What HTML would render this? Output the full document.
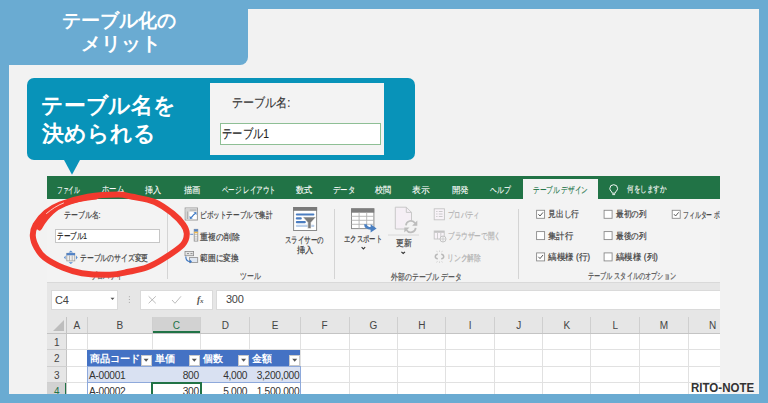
<!DOCTYPE html>
<html lang="ja"><head><meta charset="utf-8"><style>
*{margin:0;padding:0;box-sizing:border-box}
html,body{width:768px;height:403px;overflow:hidden}
body{position:relative;background:#6aabd2;font-family:"Liberation Sans",sans-serif}
.a{position:absolute}
.t{position:absolute;white-space:nowrap;line-height:1;transform-origin:0 0}
.n{position:absolute;white-space:nowrap;line-height:1;font-size:10.2px;letter-spacing:-0.3px;color:#333}
.h{position:absolute;white-space:nowrap;line-height:1;font-size:10px;color:#444;text-align:center}
svg{position:absolute;overflow:visible}
</style></head><body>

<div class="a" style="left:9px;top:9px;width:750px;height:385px;background:#f2f2f2"></div>
<div class="a" style="left:0;top:0;width:248px;height:65px;background:#6aabd2;border-bottom-right-radius:8px"></div>
<div class="a" style="left:27.4px;top:77.8px;width:387.6px;height:82.5px;background:#0893b9;border-radius:7px"></div>
<svg style="left:0;top:0" width="1" height="1"><path d="M63.5 159 L80.5 159 L72 174.8 Z" fill="#0893b9"/></svg>
<div class="a" style="left:209.7px;top:82.7px;width:174.6px;height:72.2px;background:#f3f3f3"></div>
<div class="a" style="left:220px;top:123px;width:161px;height:22px;background:#fff;border:1px solid #8ebf95"></div>


<div class="a" style="left:47px;top:176px;width:673px;height:218px;background:#fff"></div>
<div class="a" style="left:47px;top:176px;width:673px;height:23px;background:#217346"></div>
<div class="a" style="left:523px;top:179px;width:75px;height:20px;background:#f3f3f3"></div>
<div class="a" style="left:47px;top:199px;width:673px;height:83px;background:#f3f3f3"></div>
<div class="a" style="left:47px;top:282px;width:673px;height:35px;background:#e6e6e6;border-top:1px solid #d9d9d9"></div>
<!-- separators -->
<div class="a" style="left:167px;top:209px;width:1px;height:70px;background:#d4d4d4"></div>
<div class="a" style="left:334px;top:209px;width:1px;height:70px;background:#d4d4d4"></div>
<div class="a" style="left:518px;top:209px;width:1px;height:70px;background:#d4d4d4"></div>
<!-- group1 input -->
<div class="a" style="left:55px;top:229px;width:105px;height:14px;background:#fff;border:1px solid #c6c6c6"></div>
<!-- formula bar -->
<div class="a" style="left:51px;top:290px;width:67px;height:20px;background:#fff;border:1px solid #dadada"></div>
<div class="a" style="left:140px;top:290px;width:73px;height:20px;background:#fff;border:1px solid #dadada"></div>
<div class="a" style="left:216px;top:290px;width:504px;height:20px;background:#fff;border:1px solid #dadada;border-right:none"></div>

<div class="a" style="left:47px;top:317px;width:673px;height:16.5px;background:#e6e6e6"></div>
<div class="a" style="left:47px;top:317px;width:19.5px;height:80px;background:#e6e6e6"></div>
<div class="a" style="left:152.2px;top:317px;width:48.6px;height:16.3px;background:#d2d2d2"></div>
<div class="a" style="left:152.2px;top:331.3px;width:48.6px;height:2px;background:#217346"></div>
<div class="a" style="left:47px;top:382.9px;width:19.5px;height:16px;background:#d2d2d2"></div>
<div class="a" style="left:64.5px;top:382.9px;width:2px;height:16px;background:#217346"></div>
<svg style="left:0;top:0" width="1" height="1"><path d="M64 320 L64 331 L53 331 Z" fill="#bdbdbd"/></svg>
<div class="a" style="left:47px;top:333px;width:673px;height:1px;background:#c4c4c4"></div>
<div class="a" style="left:66px;top:317px;width:1px;height:80px;background:#c4c4c4"></div>
<div class="a" style="left:86.8px;top:317px;width:1px;height:16px;background:#cfcfcf"></div>
<div class="a" style="left:86.8px;top:334px;width:1px;height:65px;background:#e1e1e1"></div>
<div class="a" style="left:151.7px;top:317px;width:1px;height:16px;background:#cfcfcf"></div>
<div class="a" style="left:151.7px;top:334px;width:1px;height:65px;background:#e1e1e1"></div>
<div class="a" style="left:200.3px;top:317px;width:1px;height:16px;background:#cfcfcf"></div>
<div class="a" style="left:200.3px;top:334px;width:1px;height:65px;background:#e1e1e1"></div>
<div class="a" style="left:249.3px;top:317px;width:1px;height:16px;background:#cfcfcf"></div>
<div class="a" style="left:249.3px;top:334px;width:1px;height:65px;background:#e1e1e1"></div>
<div class="a" style="left:299.8px;top:317px;width:1px;height:16px;background:#cfcfcf"></div>
<div class="a" style="left:299.8px;top:334px;width:1px;height:65px;background:#e1e1e1"></div>
<div class="a" style="left:348.5px;top:317px;width:1px;height:16px;background:#cfcfcf"></div>
<div class="a" style="left:348.5px;top:334px;width:1px;height:65px;background:#e1e1e1"></div>
<div class="a" style="left:397.2px;top:317px;width:1px;height:16px;background:#cfcfcf"></div>
<div class="a" style="left:397.2px;top:334px;width:1px;height:65px;background:#e1e1e1"></div>
<div class="a" style="left:445.4px;top:317px;width:1px;height:16px;background:#cfcfcf"></div>
<div class="a" style="left:445.4px;top:334px;width:1px;height:65px;background:#e1e1e1"></div>
<div class="a" style="left:494.1px;top:317px;width:1px;height:16px;background:#cfcfcf"></div>
<div class="a" style="left:494.1px;top:334px;width:1px;height:65px;background:#e1e1e1"></div>
<div class="a" style="left:542.2px;top:317px;width:1px;height:16px;background:#cfcfcf"></div>
<div class="a" style="left:542.2px;top:334px;width:1px;height:65px;background:#e1e1e1"></div>
<div class="a" style="left:590.4px;top:317px;width:1px;height:16px;background:#cfcfcf"></div>
<div class="a" style="left:590.4px;top:334px;width:1px;height:65px;background:#e1e1e1"></div>
<div class="a" style="left:639.1px;top:317px;width:1px;height:16px;background:#cfcfcf"></div>
<div class="a" style="left:639.1px;top:334px;width:1px;height:65px;background:#e1e1e1"></div>
<div class="a" style="left:687.8px;top:317px;width:1px;height:16px;background:#cfcfcf"></div>
<div class="a" style="left:687.8px;top:334px;width:1px;height:65px;background:#e1e1e1"></div>
<div class="a" style="left:67px;top:349.3px;width:653px;height:1px;background:#e1e1e1"></div>
<div class="a" style="left:47px;top:349.3px;width:20px;height:1px;background:#cfcfcf"></div>
<div class="a" style="left:67px;top:366.0px;width:653px;height:1px;background:#e1e1e1"></div>
<div class="a" style="left:47px;top:366.0px;width:20px;height:1px;background:#cfcfcf"></div>
<div class="a" style="left:67px;top:382.4px;width:653px;height:1px;background:#e1e1e1"></div>
<div class="a" style="left:47px;top:382.4px;width:20px;height:1px;background:#cfcfcf"></div>
<div class="a" style="left:67px;top:398.8px;width:653px;height:1px;background:#e1e1e1"></div>
<div class="a" style="left:47px;top:398.8px;width:20px;height:1px;background:#cfcfcf"></div>
<div class="h" style="left:66.5px;top:321px;width:20.8px;color:#444">A</div>
<div class="h" style="left:87.3px;top:321px;width:64.9px;color:#444">B</div>
<div class="h" style="left:152.2px;top:321px;width:48.6px;color:#217346">C</div>
<div class="h" style="left:200.8px;top:321px;width:49.0px;color:#444">D</div>
<div class="h" style="left:249.8px;top:321px;width:50.5px;color:#444">E</div>
<div class="h" style="left:300.3px;top:321px;width:48.7px;color:#444">F</div>
<div class="h" style="left:349.0px;top:321px;width:48.7px;color:#444">G</div>
<div class="h" style="left:397.7px;top:321px;width:48.2px;color:#444">H</div>
<div class="h" style="left:445.9px;top:321px;width:48.7px;color:#444">I</div>
<div class="h" style="left:494.6px;top:321px;width:48.1px;color:#444">J</div>
<div class="h" style="left:542.7px;top:321px;width:48.2px;color:#444">K</div>
<div class="h" style="left:590.9px;top:321px;width:48.7px;color:#444">L</div>
<div class="h" style="left:639.6px;top:321px;width:48.7px;color:#444">M</div>
<div class="h" style="left:688.3px;top:321px;width:48.7px;color:#444">N</div>
<div class="h" style="left:47px;top:337.8px;width:19.5px;color:#444">1</div>
<div class="h" style="left:47px;top:354.3px;width:19.5px;color:#444">2</div>
<div class="h" style="left:47px;top:371.0px;width:19.5px;color:#444">3</div>
<div class="h" style="left:47px;top:387.4px;width:19.5px;color:#217346">4</div>
<div class="a" style="left:87.3px;top:349.8px;width:213px;height:16.7px;background:#4472c4"></div>
<div class="a" style="left:87.3px;top:366.5px;width:213px;height:16.4px;background:#d9e1f2"></div>
<div class="a" style="left:87.3px;top:382.9px;width:213px;height:16px;background:#fff"></div>
<div class="a" style="left:87.3px;top:366px;width:213px;height:1px;background:#8ea9db"></div>
<div class="a" style="left:87.3px;top:382.4px;width:213px;height:1px;background:#8ea9db"></div>
<div class="a" style="left:87px;top:366px;width:1px;height:33px;background:#8ea9db"></div>
<div class="a" style="left:300px;top:366px;width:1px;height:33px;background:#8ea9db"></div>
<div class="a" style="left:140.6px;top:354.7px;width:11px;height:11px;background:#fff;border:1px solid #c9c9c9"></div>
<svg style="left:0;top:0" width="1" height="1"><path d="M143.6 358.7 L148.6 358.7 L146.1 361.7 Z" fill="#555"/></svg>
<div class="a" style="left:188.8px;top:354.7px;width:11px;height:11px;background:#fff;border:1px solid #c9c9c9"></div>
<svg style="left:0;top:0" width="1" height="1"><path d="M191.8 358.7 L196.8 358.7 L194.3 361.7 Z" fill="#555"/></svg>
<div class="a" style="left:238.1px;top:354.7px;width:11px;height:11px;background:#fff;border:1px solid #c9c9c9"></div>
<svg style="left:0;top:0" width="1" height="1"><path d="M241.1 358.7 L246.1 358.7 L243.6 361.7 Z" fill="#555"/></svg>
<div class="a" style="left:289.2px;top:354.7px;width:11px;height:11px;background:#fff;border:1px solid #c9c9c9"></div>
<svg style="left:0;top:0" width="1" height="1"><path d="M292.2 358.7 L297.2 358.7 L294.7 361.7 Z" fill="#555"/></svg>
<div class="n" style="left:89px;top:370.5px">A-00001</div>
<div class="n" style="left:118.8px;top:370.5px;width:80px;text-align:right">800</div>
<div class="n" style="left:167.2px;top:370.5px;width:80px;text-align:right">4,000</div>
<div class="n" style="left:219.3px;top:370.5px;width:80px;text-align:right">3,200,000</div>
<div class="n" style="left:89px;top:387px">A-00002</div>
<div class="n" style="left:118.8px;top:387px;width:80px;text-align:right">300</div>
<div class="n" style="left:167.2px;top:387px;width:80px;text-align:right">5,000</div>
<div class="n" style="left:219.3px;top:387px;width:80px;text-align:right">1,500,000</div>
<div class="a" style="left:151px;top:382.4px;width:51px;height:17px;border:2px solid #217346"></div>

<svg style="left:0;top:0" width="768" height="403" viewBox="0 0 768 403">
<!-- bulb -->
<path d="M612.2 193.2 c0 -1.6 -2.4 -2.6 -2.4 -4.6 a3.9 3.9 0 0 1 7.8 0 c0 2 -2.4 3 -2.4 4.6 z" fill="none" stroke="#fff" stroke-width="0.95" stroke-linejoin="round"/>
<path d="M612.3 194.6 h2.8" stroke="#fff" stroke-width="0.9"/>
<!-- resize icon -->
<rect x="66.8" y="253.3" width="8" height="7.6" fill="#eee" stroke="#9a9a9a" stroke-width="0.8"/>
<rect x="66.6" y="253.1" width="8.4" height="2.2" fill="#4f81c7"/>
<path d="M69.5 255.5 v5.3 M72.2 255.5 v5.3" stroke="#aaa" stroke-width="0.8"/>
<path d="M68.6 252.4 L70.8 250.6 L73 252.4 Z M68.6 262.3 L70.8 264.1 L73 262.3 Z M65.6 255.4 L63.9 257.5 L65.6 259.6 Z M76 255.4 L77.7 257.5 L76 259.6 Z" fill="#5b8fd0"/>
<!-- pivot -->
<rect x="185.2" y="208" width="12.2" height="12" fill="#fff" stroke="#9a9a9a" stroke-width="1"/>
<rect x="185.7" y="208.5" width="11.2" height="3.2" fill="#d4d4d4"/>
<rect x="185.7" y="208.5" width="3.6" height="11" fill="#d4d4d4"/>
<path d="M189.8 210.1 h6.6 M187.5 211.5 v7.5" stroke="#a0a0a0" stroke-width="0.7"/>
<path d="M191 217.4 c1.2 -0.2 1.6 -1 2 -1.8 c0.4 -0.8 0.8 -1.6 2 -1.8" fill="none" stroke="#3f79c4" stroke-width="1.2"/>
<path d="M189.6 216 l0.2 3 l2.9 -0.4 z M196.6 215 l-0.2 -3 l-2.9 0.4 z" fill="#3f79c4"/>
<!-- remove duplicates -->
<rect x="194.2" y="229.3" width="3.6" height="11.8" fill="#f6f6f6" stroke="#8c8c8c" stroke-width="0.8"/>
<rect x="194.2" y="229.3" width="3.6" height="2.4" fill="#4f81c7"/>
<rect x="194.2" y="231.7" width="3.6" height="1.6" fill="#f0b94a"/>
<path d="M194.2 234.6 h3.6 M194.2 236.8 h3.6 M194.2 239 h3.6" stroke="#9c9c9c" stroke-width="0.6"/>
<path d="M190.2 234.3 h3" stroke="#4f81c7" stroke-width="0.9"/>
<!-- convert to range -->
<rect x="185" y="251.5" width="8.6" height="4.2" fill="#e4e4e4" stroke="#8c8c8c" stroke-width="0.8"/>
<path d="M187 253.6 h2 M190.5 253.6 h2" stroke="#777" stroke-width="0.8"/>
<rect x="189.5" y="257.6" width="8.2" height="4.8" fill="#dfe6f0" stroke="#8c8c8c" stroke-width="0.8"/>
<path d="M185.8 256.6 c0 4 1.5 5 4.4 5" fill="none" stroke="#3f79c4" stroke-width="1.2"/>
<path d="M189.8 259.6 l2.2 2 l-2.2 2 z" fill="#3f79c4"/>
<!-- slicer -->
<rect x="293.6" y="207.5" width="23" height="23" fill="#fff" stroke="#8a8a8a" stroke-width="1"/>
<rect x="293.1" y="207" width="24" height="3.8" fill="#7a7a7a"/>
<rect x="295.8" y="213.4" width="18.6" height="2.2" rx="1" fill="#4a7cc0"/>
<rect x="295.8" y="217.2" width="6" height="2.2" rx="1" fill="#4a7cc0"/>
<rect x="295.8" y="221" width="10" height="2.2" rx="1" fill="#4a7cc0"/>
<rect x="295.8" y="224.8" width="18.6" height="2.2" rx="1" fill="#bcd0ea"/>
<path d="M302.8 217 L316 217 L311 222.5 L311 228.5 L307.8 228.5 L307.8 222.5 Z" fill="#7a7a7a" stroke="#f3f3f3" stroke-width="0.6"/>
<!-- export -->
<rect x="351.5" y="208.8" width="22.4" height="19.8" fill="#fff" stroke="#8c8c8c" stroke-width="1"/>
<rect x="351.2" y="208.4" width="23" height="4.3" fill="#7d7d7d"/>
<path d="M359.1 212.7 v15.9 M366.7 212.7 v15.9 M351.5 216.3 h22.4 M351.5 220.3 h22.4 M351.5 224.3 h22.4" stroke="#b2b2b2" stroke-width="0.9"/>
<path d="M365.4 224.3 Q365.6 228.4 371.2 228.4" fill="none" stroke="#4a7fc1" stroke-width="2.7"/>
<path d="M370.6 224.2 L376.6 228.4 L370.6 232.4 Z" fill="#4a7fc1"/>
<!-- chevrons -->
<path d="M361.6 247.2 l1.8 1.7 l1.8 -1.7" fill="none" stroke="#333" stroke-width="1.1"/>
<path d="M401.4 251.8 l1.8 1.7 l1.8 -1.7" fill="none" stroke="#333" stroke-width="1.1"/>
<!-- refresh -->
<path d="M395.3 207.2 h11 l5.2 5.2 v16.6 h-16.2 z" fill="#f5eff5" stroke="#c4c4c4" stroke-width="0.9"/>
<path d="M406.3 207.2 v5.2 h5.2" fill="none" stroke="#c4c4c4" stroke-width="0.9"/>
<circle cx="410.8" cy="226.6" r="6.6" fill="#f3f3f3"/>
<path d="M405.9 225.4 a5 5 0 0 1 9.2 -2.2 M415.7 227.8 a5 5 0 0 1 -9.2 2.2" fill="none" stroke="#bdbdbd" stroke-width="1.7"/>
<path d="M417.3 220.6 v5.2 h-5.2 z M404.3 232.6 v-5.2 h5.2 z" fill="#bdbdbd"/>
<path d="M388 235 h31" stroke="#d8d8d8" stroke-width="1"/>
<!-- properties -->
<rect x="434.2" y="208.8" width="10.2" height="11" fill="#f8f3f8" stroke="#c4c4c4" stroke-width="0.9"/>
<path d="M436.2 211.5 h1.3 M436.2 214 h1.3 M436.2 216.5 h1.3 M438.8 211.5 h3.8 M438.8 214 h3.8 M438.8 216.5 h3.8" stroke="#c4c4c4" stroke-width="0.9"/>
<!-- browser -->
<rect x="434.2" y="231" width="10" height="8" fill="#f8f3f8" stroke="#c4c4c4" stroke-width="0.9"/>
<rect x="434.2" y="231" width="10" height="1.8" fill="#c4c4c4"/>
<path d="M437.5 233 v6 M440.8 233 v6" stroke="#c4c4c4" stroke-width="0.8"/>
<circle cx="443" cy="239" r="3" fill="#f3f3f3" stroke="#c0c0c0" stroke-width="0.9"/>
<path d="M440 239 h6 M443 236 v6" stroke="#c0c0c0" stroke-width="0.6"/>
<!-- unlink -->
<path d="M437.8 254.2 c-3 0 -3.6 4.6 0 4.6 M441.2 254.2 c3 0 3.6 4.6 0 4.6" fill="none" stroke="#b8b8b8" stroke-width="1.5"/>
<path d="M436.5 250.8 l1 1.5 M439.5 250.4 v1.6 M442.5 250.8 l-1 1.5 M436.5 262.6 l1 -1.5 M439.5 263 v-1.6 M442.5 262.6 l-1 -1.5" stroke="#c4c4c4" stroke-width="0.6"/>
<!-- checkboxes -->
<rect x="536.6" y="210.3" width="8" height="8" fill="#fff" stroke="#8a8a8a" stroke-width="0.9"/>
<rect x="536.6" y="231.6" width="8" height="8" fill="#fff" stroke="#8a8a8a" stroke-width="0.9"/>
<rect x="536.6" y="252.9" width="8" height="8" fill="#fff" stroke="#8a8a8a" stroke-width="0.9"/>
<rect x="604.1" y="210.3" width="8" height="8" fill="#fff" stroke="#8a8a8a" stroke-width="0.9"/>
<rect x="604.1" y="231.6" width="8" height="8" fill="#fff" stroke="#8a8a8a" stroke-width="0.9"/>
<rect x="604.1" y="252.9" width="8" height="8" fill="#fff" stroke="#8a8a8a" stroke-width="0.9"/>
<rect x="672.2" y="210.3" width="8" height="8" fill="#fff" stroke="#8a8a8a" stroke-width="0.9"/>
<path d="M538.4 214.2 l1.6 1.8 l3 -3.6 M538.4 256.8 l1.6 1.8 l3 -3.6 M674 214.2 l1.6 1.8 l3 -3.6" fill="none" stroke="#444" stroke-width="0.9"/>
<!-- formula bar -->
<path d="M110.5 297.7 h4 l-2 2.4 z" fill="#555"/>
<path d="M129.4 296.3 v0.9 M129.4 299.1 v0.9 M129.4 301.9 v0.9" stroke="#999" stroke-width="0.9"/>
<path d="M148.6 296.3 l7.2 7 M155.8 296.3 l-7.2 7" stroke="#b4b4b4" stroke-width="0.9"/>
<path d="M172 300 l3 3.3 l6 -7" fill="none" stroke="#b4b4b4" stroke-width="0.9"/>
</svg>

<div class="t" style="left:62.3px;top:11.0px;font-size:19px;font-weight:bold;color:#fff;">テーブル化の</div>
<div class="t" style="left:81.11px;top:33.85px;font-size:19px;font-weight:bold;color:#fff;transform:scaleX(1.0457);">メリット</div>
<div class="t" style="left:40.71px;top:94.7px;font-size:22px;font-weight:bold;color:#fff;transform:scaleX(0.9902);">テーブル名を</div>
<div class="t" style="left:41.7px;top:122.75px;font-size:22px;font-weight:bold;color:#fff;transform:scaleX(0.9964);">決められる</div>
<div class="t" style="left:231.55px;top:96.25px;font-size:13px;-webkit-text-stroke-width:0.15px;color:#333;transform:scaleX(0.8493);">テーブル名:</div>
<div class="t" style="left:221.71px;top:126.9px;font-size:13px;-webkit-text-stroke-width:0.15px;color:#222;transform:scaleX(0.7914);">テーブル1</div>
<div class="t" style="left:57.37px;top:185.75px;font-size:9px;-webkit-text-stroke-width:0.1px;color:#fff;transform:scaleX(0.6343);">ファイル</div>
<div class="t" style="left:101.8px;top:185.25px;font-size:9px;-webkit-text-stroke-width:0.1px;color:#fff;transform:scaleX(0.8154);">ホーム</div>
<div class="t" style="left:145.3px;top:185.75px;font-size:9px;-webkit-text-stroke-width:0.1px;color:#fff;transform:scaleX(0.8944);">挿入</div>
<div class="t" style="left:183.5px;top:185.75px;font-size:9px;-webkit-text-stroke-width:0.1px;color:#fff;transform:scaleX(0.9167);">描画</div>
<div class="t" style="left:221.8px;top:185.75px;font-size:9px;-webkit-text-stroke-width:0.1px;color:#fff;transform:scaleX(0.7178);">ページ レイアウト</div>
<div class="t" style="left:296.2px;top:185.75px;font-size:9px;-webkit-text-stroke-width:0.1px;color:#fff;transform:scaleX(0.9056);">数式</div>
<div class="t" style="left:333.38px;top:185.75px;font-size:9px;-webkit-text-stroke-width:0.1px;color:#fff;transform:scaleX(0.8167);">データ</div>
<div class="t" style="left:374.8px;top:185.75px;font-size:9px;-webkit-text-stroke-width:0.1px;color:#fff;transform:scaleX(0.9);">校閲</div>
<div class="t" style="left:412.42px;top:185.75px;font-size:9px;-webkit-text-stroke-width:0.1px;color:#fff;transform:scaleX(0.9765);">表示</div>
<div class="t" style="left:452.0px;top:185.75px;font-size:9px;-webkit-text-stroke-width:0.1px;color:#fff;transform:scaleX(0.9389);">開発</div>
<div class="t" style="left:489.9px;top:186.25px;font-size:9px;-webkit-text-stroke-width:0.1px;color:#fff;transform:scaleX(0.7556);">ヘルプ</div>
<div class="t" style="left:532.8px;top:185.75px;font-size:9px;-webkit-text-stroke-width:0.1px;color:#217346;transform:scaleX(0.7365);">テーブル デザイン</div>
<div class="t" style="left:626.9px;top:185.1px;font-size:9px;-webkit-text-stroke-width:0.1px;color:#fff;transform:scaleX(0.7333);">何をしますか</div>
<div class="t" style="left:63.7px;top:210.9px;font-size:9px;-webkit-text-stroke-width:0.2px;color:#444;transform:scaleX(0.7681);">テーブル名:</div>
<div class="t" style="left:57.1px;top:231.65px;font-size:9px;-webkit-text-stroke-width:0.2px;color:#222;transform:scaleX(0.7293);">テーブル1</div>
<div class="t" style="left:79.7px;top:253.6px;font-size:9px;-webkit-text-stroke-width:0.2px;color:#444;transform:scaleX(0.7578);">テーブルのサイズ変更</div>
<div class="t" style="left:90.81px;top:272.4px;font-size:9px;-webkit-text-stroke-width:0.2px;color:#555;transform:scaleX(0.6857);">プロパティ</div>
<div class="t" style="left:199.57px;top:210.75px;font-size:9px;-webkit-text-stroke-width:0.2px;color:#444;transform:scaleX(0.7316);">ピボットテーブルで集計</div>
<div class="t" style="left:200.3px;top:232.95px;font-size:9px;-webkit-text-stroke-width:0.2px;color:#444;transform:scaleX(0.8756);">重複の削除</div>
<div class="t" style="left:200.3px;top:253.85px;font-size:9px;-webkit-text-stroke-width:0.2px;color:#444;transform:scaleX(0.8644);">範囲に変換</div>
<div class="t" style="left:285.28px;top:235.6px;font-size:9px;-webkit-text-stroke-width:0.2px;color:#444;transform:scaleX(0.717);">スライサーの</div>
<div class="t" style="left:297.0px;top:245.75px;font-size:9px;-webkit-text-stroke-width:0.2px;color:#444;transform:scaleX(0.9167);">挿入</div>
<div class="t" style="left:240.13px;top:272.25px;font-size:9px;-webkit-text-stroke-width:0.2px;color:#555;transform:scaleX(0.7654);">ツール</div>
<div class="t" style="left:344.3px;top:234.65px;font-size:9px;-webkit-text-stroke-width:0.2px;color:#444;transform:scaleX(0.7019);">エクスポート</div>
<div class="t" style="left:395.6px;top:239.0px;font-size:9px;-webkit-text-stroke-width:0.2px;color:#444;transform:scaleX(0.8694);">更新</div>
<div class="t" style="left:448.1px;top:211.2px;font-size:9px;-webkit-text-stroke-width:0.2px;color:#b4b4b4;transform:scaleX(0.7);">プロパティ</div>
<div class="t" style="left:448.06px;top:232.15px;font-size:9px;-webkit-text-stroke-width:0.2px;color:#b4b4b4;transform:scaleX(0.7353);">ブラウザーで開く</div>
<div class="t" style="left:447.29px;top:253.55px;font-size:9px;-webkit-text-stroke-width:0.2px;color:#b4b4b4;transform:scaleX(0.7558);">リンク解除</div>
<div class="t" style="left:391.2px;top:272.6px;font-size:9px;-webkit-text-stroke-width:0.2px;color:#555;transform:scaleX(0.7641);">外部のテーブル データ</div>
<div class="t" style="left:548.0px;top:209.95px;font-size:9px;-webkit-text-stroke-width:0.2px;color:#444;transform:scaleX(0.8657);">見出し行</div>
<div class="t" style="left:548.0px;top:231.85px;font-size:9px;-webkit-text-stroke-width:0.2px;color:#444;transform:scaleX(0.9308);">集計行</div>
<div class="t" style="left:548.0px;top:253.05px;font-size:9px;-webkit-text-stroke-width:0.2px;color:#444;transform:scaleX(0.9477);">縞模様 (行)</div>
<div class="t" style="left:615.9px;top:210.45px;font-size:9px;-webkit-text-stroke-width:0.2px;color:#444;transform:scaleX(0.8444);">最初の列</div>
<div class="t" style="left:615.9px;top:231.85px;font-size:9px;-webkit-text-stroke-width:0.2px;color:#444;transform:scaleX(0.8444);">最後の列</div>
<div class="t" style="left:615.9px;top:253.05px;font-size:9px;-webkit-text-stroke-width:0.2px;color:#444;transform:scaleX(0.9386);">縞模様 (列)</div>
<div class="t" style="left:683.05px;top:211.15px;font-size:9px;-webkit-text-stroke-width:0.2px;color:#444;transform:scaleX(0.6482);">フィルター ボ</div>
<div class="t" style="left:587.5px;top:272.4px;font-size:9px;-webkit-text-stroke-width:0.2px;color:#555;transform:scaleX(0.6836);">テーブル スタイルのオプション</div>
<div class="t" style="left:89.7px;top:354.05px;font-size:10px;font-weight:bold;color:#fff;transform:scaleX(1.0122);">商品コード</div>
<div class="t" style="left:155.2px;top:354.35px;font-size:10px;font-weight:bold;color:#fff;transform:scaleX(1.0211);">単価</div>
<div class="t" style="left:203.1px;top:354.35px;font-size:10px;font-weight:bold;color:#fff;transform:scaleX(0.99);">個数</div>
<div class="t" style="left:252.1px;top:354.35px;font-size:10px;font-weight:bold;color:#fff;transform:scaleX(0.99);">金額</div>
<div class="n" style="left:55px;top:294.5px;font-size:11px;color:#444">C4</div>
<div class="n" style="left:226px;top:294px;font-size:11px;color:#444">300</div>
<div class="n" style="left:197px;top:295.5px;font-size:9.5px;color:#555;font-family:'Liberation Serif',serif;font-style:italic;font-weight:bold">f<span style="font-size:7px">x</span></div>
<svg style="left:0;top:0" width="768" height="403" viewBox="0 0 768 403">
<path d="M32.8 236.0 C32.6 232.2 33.3 228.9 35.5 225.0 C37.7 221.1 41.9 215.9 46.0 212.5 C50.1 209.1 53.0 207.1 60.0 204.5 C67.0 201.9 78.3 198.5 88.0 196.8 C97.7 195.2 110.6 194.6 118.0 194.6 C125.4 194.6 126.3 195.6 132.4 196.8 C138.5 198.0 148.0 199.2 154.7 202.0 C161.4 204.8 167.8 209.8 172.6 213.5 C177.3 217.2 180.8 221.1 183.2 224.5 C185.6 227.9 186.9 230.6 186.8 234.0 C186.7 237.4 186.5 240.8 182.5 245.0 C178.5 249.2 168.9 255.3 163.0 259.0 C157.1 262.7 152.9 265.1 147.2 267.2 C141.5 269.3 134.8 270.5 128.6 271.8 C122.4 273.1 117.8 274.6 110.0 274.8 C102.2 275.0 89.7 274.4 81.9 273.2 C74.1 272.0 69.4 270.4 63.2 267.8 C57.0 265.2 49.0 260.9 44.6 257.6 C40.2 254.3 38.8 251.6 36.8 248.0 C34.8 244.4 33.0 239.8 32.8 236.0 Z" fill="none" stroke="#f23a2e" stroke-width="6"/>
<path d="M39.5 228.0 C40.4 226.6 42.1 222.8 45.0 219.5 C47.9 216.2 52.0 211.2 57.0 208.0 C62.0 204.8 68.5 202.3 75.0 200.5 C81.5 198.7 92.5 197.6 96.0 197.0" fill="none" stroke="#f23a2e" stroke-width="5" stroke-linecap="round"/>
<path d="M46.5 213.5 C52 209 57 205.5 63.5 203" fill="none" stroke="#fbe3df" stroke-width="0.9" stroke-linecap="round"/>
</svg>
<div class="a" style="left:0;top:394px;width:768px;height:9px;background:#6aabd2"></div>
<div class="a" style="left:691px;top:382px;font-size:12px;font-weight:bold;color:#333;white-space:nowrap;line-height:1;transform:scaleX(0.96);transform-origin:0 0">RITO-NOTE</div>
</body></html>
